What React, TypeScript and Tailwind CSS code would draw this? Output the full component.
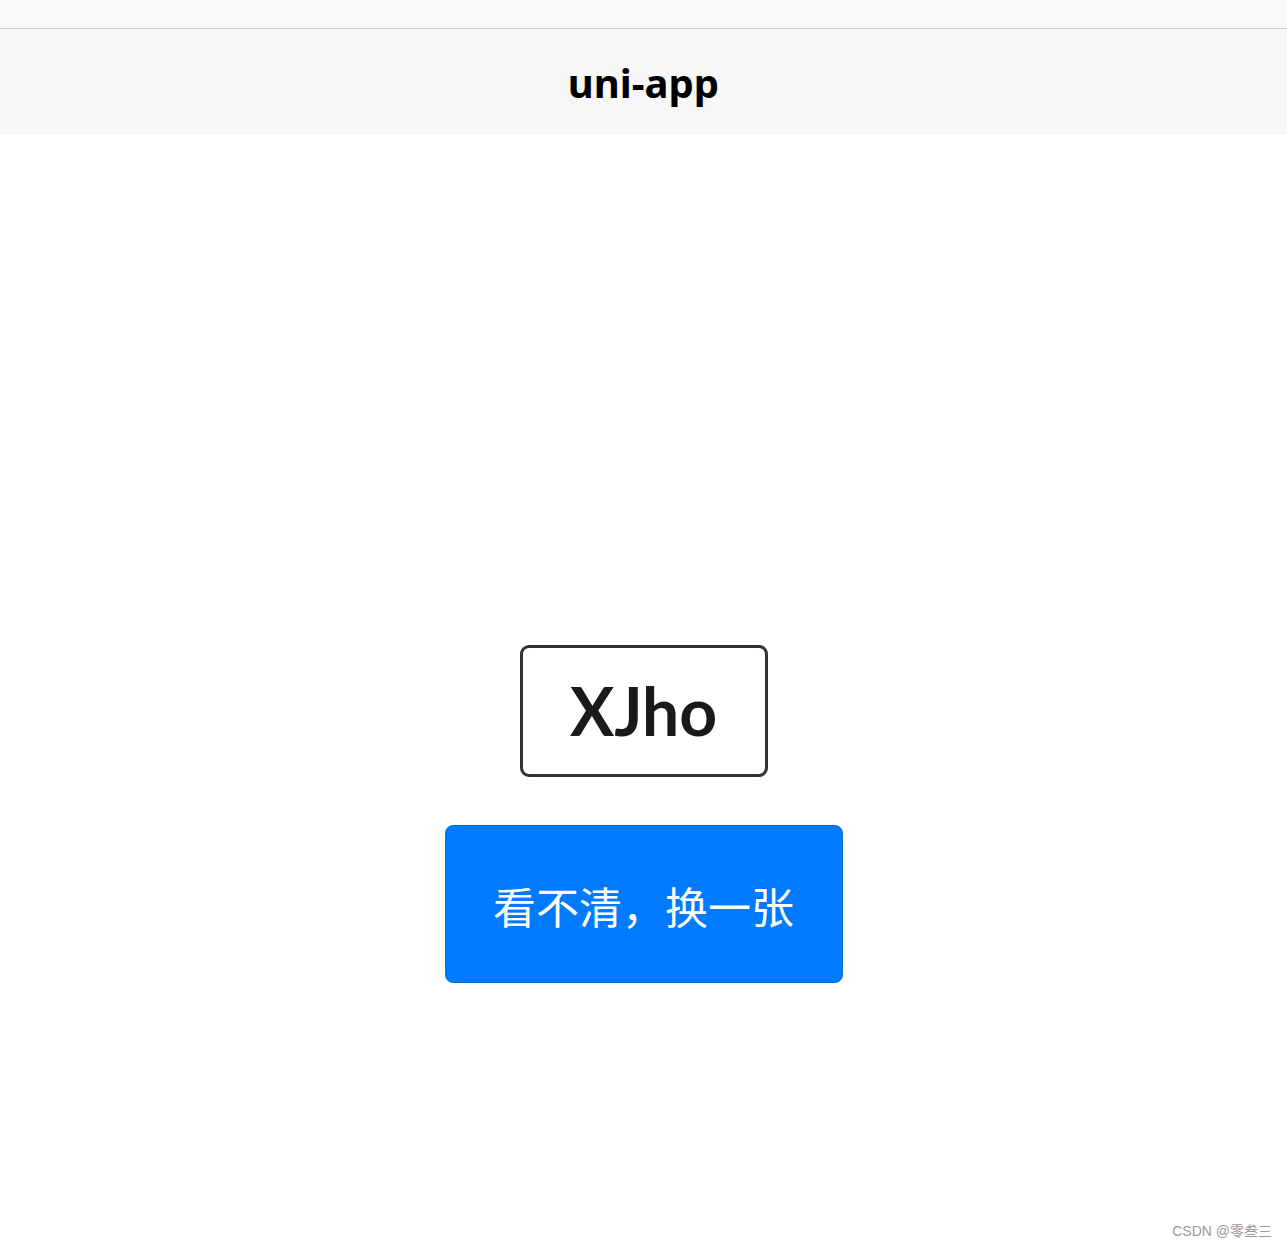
export default function App() {
  return (
    <div
      className="relative min-h-[1249px] bg-white"
      style={{ fontFamily: '"Noto Sans", "Noto Sans CJK SC", sans-serif' }}
    >
      {/* Status strip */}
      <div className="h-[29px] border-b border-[#cfcfcf] bg-[#f8f8f9]" />

      {/* Nav bar */}
      <header className="flex h-[106px] items-center justify-center bg-[#f7f7f7]">
        <h1 className="mt-[2px] text-[40px] font-bold leading-none text-black">uni-app</h1>
      </header>

      <main className="flex flex-col items-center pt-[510px]">
        <div className="flex h-[132px] w-[248px] items-center justify-center rounded-[9px] border-[3px] border-[#333333] bg-white">
          <span
            className="text-[66px] font-bold leading-none text-[#1a1a1a]"
            style={{ fontFamily: 'Lato, "Noto Sans", sans-serif' }}
          >
            XJho
          </span>
        </div>

        <button className="mt-[48px] flex h-[158px] w-[398px] items-center justify-center rounded-[8px] border border-[#0a6fe0] bg-[#007aff] text-[43px] text-white">
          <span className="mt-[2px]" style={{ fontFamily: '"Noto Sans CJK SC", sans-serif' }}>
            看不清，换一张
          </span>
        </button>
      </main>

      <div
        className="absolute bottom-[7px] right-[15px] text-[14px] text-[#9a9a9a]"
        style={{ fontFamily: '"Liberation Sans", "Noto Sans CJK SC", sans-serif' }}
      >
        CSDN @零叁三
      </div>
    </div>
  )
}
